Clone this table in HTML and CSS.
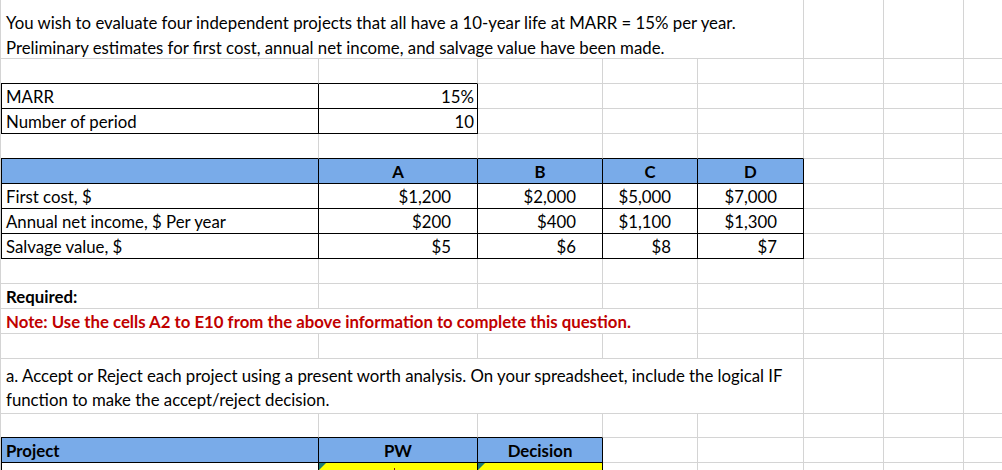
FILE: index.html
```html
<!DOCTYPE html>
<html lang="en">
<head>
<meta charset="utf-8">
<title>Sheet</title>
<link rel="stylesheet" href="styles.css">
</head>
<body>
<div class="sheet">
  <!-- row 1 -->
  <div class="c span5 wrap r1">You wish to evaluate four independent projects that all have a 10-year life at MARR = 15% per year.<br>Preliminary estimates for first cost, annual net income, and salvage value have been made.</div>
  <div class="c"></div><div class="c"></div><div class="c"></div>
  <!-- row 2 -->
  <div class="c tb"></div><div class="c tb"></div><div class="c"></div><div class="c"></div><div class="c"></div><div class="c"></div><div class="c"></div><div class="c"></div>
  <!-- row 3 -->
  <div class="c k kl">MARR</div><div class="c k num">15%</div><div class="c"></div><div class="c"></div><div class="c"></div><div class="c"></div><div class="c"></div><div class="c"></div>
  <!-- row 4 -->
  <div class="c k kl">Number of period</div><div class="c k num">10</div><div class="c"></div><div class="c"></div><div class="c"></div><div class="c"></div><div class="c"></div><div class="c"></div>
  <!-- row 5 -->
  <div class="c tb"></div><div class="c tb"></div><div class="c tb"></div><div class="c tb"></div><div class="c tb"></div><div class="c"></div><div class="c"></div><div class="c"></div>
  <!-- row 6 -->
  <div class="c k kl hd"></div><div class="c k hd ctr">A</div><div class="c k hd ctr">B</div><div class="c k hd ctr">C</div><div class="c k hd ctr">D</div><div class="c"></div><div class="c"></div><div class="c"></div>
  <!-- row 7 -->
  <div class="c k kl">First cost, $</div><div class="c k amt">$1,200</div><div class="c k amt">$2,000</div><div class="c k amt">$5,000</div><div class="c k amt">$7,000</div><div class="c"></div><div class="c"></div><div class="c"></div>
  <!-- row 8 -->
  <div class="c k kl">Annual net income, $ Per year</div><div class="c k amt">$200</div><div class="c k amt">$400</div><div class="c k amt">$1,100</div><div class="c k amt">$1,300</div><div class="c"></div><div class="c"></div><div class="c"></div>
  <!-- row 9 -->
  <div class="c k kl">Salvage value, $</div><div class="c k amt">$5</div><div class="c k amt">$6</div><div class="c k amt">$8</div><div class="c k amt">$7</div><div class="c"></div><div class="c"></div><div class="c"></div>
  <!-- row 10 -->
  <div class="c"></div><div class="c"></div><div class="c"></div><div class="c"></div><div class="c"></div><div class="c"></div><div class="c"></div><div class="c"></div>
  <!-- row 11 -->
  <div class="c bold">Required:</div><div class="c"></div><div class="c"></div><div class="c"></div><div class="c"></div><div class="c"></div><div class="c"></div><div class="c"></div>
  <!-- row 12 -->
  <div class="c span4 note">Note: Use the cells A2 to E10 from the above information to complete this question.</div><div class="c"></div><div class="c"></div><div class="c"></div><div class="c"></div>
  <!-- row 13 -->
  <div class="c"></div><div class="c"></div><div class="c"></div><div class="c"></div><div class="c"></div><div class="c"></div><div class="c"></div><div class="c"></div>
  <!-- row 14 -->
  <div class="c span5 wrap r14">a. Accept or Reject each project using a present worth analysis. On your spreadsheet, include the logical IF<br>function to make the accept/reject decision.</div>
  <div class="c"></div><div class="c"></div><div class="c"></div>
  <!-- row 15 -->
  <div class="c tb"></div><div class="c tb"></div><div class="c tb"></div><div class="c"></div><div class="c"></div><div class="c"></div><div class="c"></div><div class="c"></div>
  <!-- row 16 -->
  <div class="c k kl hd">Project</div><div class="c k hd ctr">PW</div><div class="c k hd ctr">Decision</div><div class="c"></div><div class="c"></div><div class="c"></div><div class="c"></div><div class="c"></div>
  <!-- row 17 -->
  <div class="c k kl"></div><div class="c k y mark"></div><div class="c k y"></div><div class="c"></div><div class="c"></div><div class="c"></div><div class="c"></div><div class="c"></div>
</div>
</body>
</html>
```

FILE: styles.css
```css
* { box-sizing: border-box; }
html, body {
  margin: 0;
  padding: 0;
  background: #fff;
  overflow: hidden;
}
body {
  font-family: Lato, "Liberation Sans", sans-serif;
  font-size: 16.8px;
  color: #000;
}
.sheet {
  display: grid;
  grid-template-columns: 318px 159px 125px 95px 106px 80px 80px 80px;
  grid-template-rows: 59px repeat(12, 25px) 55px 24px 25px 25px;
  width: 1044px;
  border-left: 1px solid #d4d4d4;
}
.c {
  position: relative;
  display: flex;
  align-items: flex-end;
  min-width: 0;
  padding: 0 5px 2px 5px;
  line-height: 18px;
  white-space: nowrap;
  border-right: 1px solid #d4d4d4;
  border-bottom: 1px solid #d4d4d4;
}
.span5 { grid-column: span 5; }
.span4 { grid-column: span 4; }
.wrap {
  display: block;
  white-space: normal;
}
.r1 { line-height: 25px; padding-top: 10px; }
.r14 { line-height: 24px; padding-top: 5px; }
.tb { border-bottom-color: #000; }
.k {
  border-right-color: #000;
  border-bottom-color: #000;
}
.kl {
  border-left: 1px solid #000;
  padding-left: 4px;
}
.num { justify-content: flex-end; padding-right: 3px; }
.amt { justify-content: flex-end; padding-right: 26px; }
.ctr { justify-content: center; }
.hd {
  background: #79abe9;
  font-weight: 700;
}
.bold { font-weight: 700; }
.note {
  font-weight: 700;
  color: #c00000;
}
.y { background: #ffff00; }
.y::before {
  content: "";
  position: absolute;
  left: 0;
  top: 0;
  border-top: 7px solid #1e7b74;
  border-right: 7px solid transparent;
}
.mark::after {
  content: "";
  position: absolute;
  left: 75px;
  top: 5px;
  width: 1px;
  height: 4px;
  background: #8b1010;
}
```
